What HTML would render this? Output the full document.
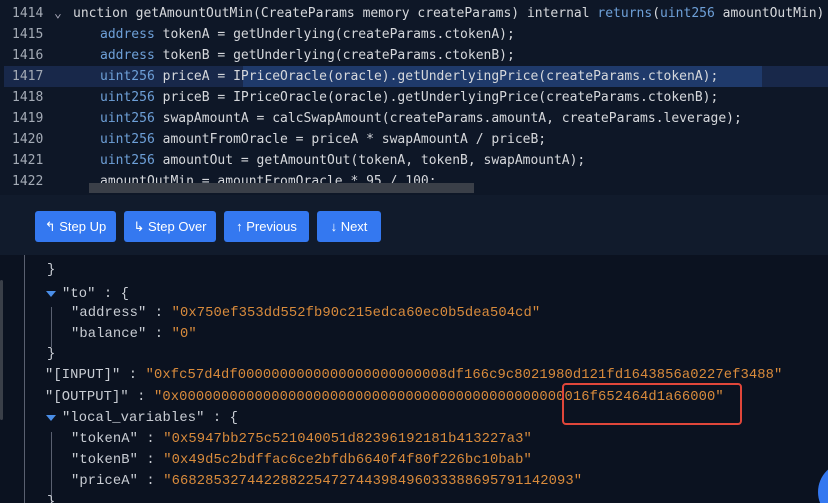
<!DOCTYPE html>
<html style="overflow:hidden"><head><style>
html,body{overflow:hidden;width:828px;height:503px}
body{margin:0;background:#0b1220;position:relative}
.code{position:absolute;left:0;top:0;width:828px;height:195px;background:#0e1727;font-family:"DejaVu Sans Mono","Liberation Mono",monospace;font-size:13px;color:#d6d8dc}
.ln{position:absolute;left:12px;color:#a4abb6;white-space:pre;line-height:21px}
.ct{position:absolute;left:100px;white-space:pre;line-height:21px}
.k{color:#6ea0d8}
.hl{position:absolute;left:4px;width:824px;top:66px;height:21px;background:#18284a}
.hl2{position:absolute;left:243px;width:519px;top:66px;height:21px;background:#1f3a6b}
.sb{position:absolute;left:89px;top:183px;width:385px;height:10px;background:#3a3f48}
.bar{position:absolute;left:0;top:195px;width:828px;height:60px;background:#111b2c}
.btn{position:absolute;top:211px;height:31px;background:#3478f0;border-radius:3px;color:#fff;font-family:"Liberation Sans",sans-serif;font-size:13px;line-height:31px;text-align:center}
.json{position:absolute;left:0;top:255px;font-family:"Liberation Mono",monospace;font-size:13.8px;letter-spacing:0.1px;color:#c9cdd4}
.r{position:absolute;white-space:pre;line-height:21px}
.v{color:#d98b3c}
.vl{position:absolute;width:1px;background:#5a6070}
.tri{position:absolute;width:0;height:0;border-left:5px solid transparent;border-right:5px solid transparent;border-top:6px solid #4a8ee8}
</style></head><body>
<div class="code">
<div class="hl"></div><div class="hl2"></div>
<div class="ln" style="top:3px">1414<br>1415<br>1416<br>1417<br>1418<br>1419<br>1420<br>1421<br>1422</div>
<div class="ln" style="top:3px;left:54px;color:#aab">⌄</div>
<div class="ct" style="top:3px;left:73px">unction getAmountOutMin(CreateParams memory createParams) internal <span class="k">returns</span>(<span class="k">uint256</span> amountOutMin)</div>
<div class="ct" style="top:24px"><span class="k">address</span> tokenA = getUnderlying(createParams.ctokenA);
<span class="k">address</span> tokenB = getUnderlying(createParams.ctokenB);
<span class="k">uint256</span> priceA = IPriceOracle(oracle).getUnderlyingPrice(createParams.ctokenA);
<span class="k">uint256</span> priceB = IPriceOracle(oracle).getUnderlyingPrice(createParams.ctokenB);
<span class="k">uint256</span> swapAmountA = calcSwapAmount(createParams.amountA, createParams.leverage);
<span class="k">uint256</span> amountFromOracle = priceA * swapAmountA / priceB;
<span class="k">uint256</span> amountOut = getAmountOut(tokenA, tokenB, swapAmountA);
amountOutMin = amountFromOracle * 95 / 100;</div>
<div class="sb"></div>
</div>
<div class="bar"></div>
<div class="btn" style="left:35px;width:81px">↰ Step Up</div>
<div class="btn" style="left:124px;width:92px">↳ Step Over</div>
<div class="btn" style="left:224px;width:85px">↑ Previous</div>
<div class="btn" style="left:317px;width:64px">↓ Next</div>
<div style="position:absolute;left:0;top:280px;width:3px;height:140px;background:#3a3f48;border-radius:2px"></div>
<div class="vl" style="left:24px;top:255px;height:248px"></div>
<div class="vl" style="left:51px;top:307px;height:40px"></div>
<div class="vl" style="left:51px;top:432px;height:71px"></div>
<div class="tri" style="left:46px;top:291px"></div>
<div class="tri" style="left:46px;top:415px"></div>
<div class="json">
<div class="r" style="left:47px;top:5px">}</div>
<div class="r" style="left:62px;top:29px">"to" : {</div>
<div class="r" style="left:71px;top:48px">"address" : <span class="v">"0x750ef353dd552fb90c215edca60ec0b5dea504cd"</span></div>
<div class="r" style="left:71px;top:69px">"balance" : <span class="v">"0"</span></div>
<div class="r" style="left:47px;top:89px">}</div>
<div class="r" style="left:45px;top:110px">"[INPUT]" : <span class="v">"0xfc57d4df0000000000000000000000008df166c9c8021980d121fd1643856a0227ef3488"</span></div>
<div class="r" style="left:45px;top:132px">"[OUTPUT]" : <span class="v">"0x0000000000000000000000000000000000000000000000016f652464d1a66000"</span></div>
<div class="r" style="left:62px;top:153px">"local_variables" : {</div>
<div class="r" style="left:71px;top:174px">"tokenA" : <span class="v">"0x5947bb275c521040051d82396192181b413227a3"</span></div>
<div class="r" style="left:71px;top:195px">"tokenB" : <span class="v">"0x49d5c2bdffac6ce2bfdb6640f4f80f226bc10bab"</span></div>
<div class="r" style="left:71px;top:216px">"priceA" : <span class="v">"668285327442288225472744398496033388695791142093"</span></div>
<div class="r" style="left:47px;top:237px">}</div>
</div>
<div style="position:absolute;left:562px;top:383px;width:176px;height:38px;border:2px solid #e0463a;border-radius:4px"></div>
<div style="position:absolute;left:818px;top:462px;width:60px;height:60px;border-radius:50%;background:#3478f0"></div>
</body></html>
